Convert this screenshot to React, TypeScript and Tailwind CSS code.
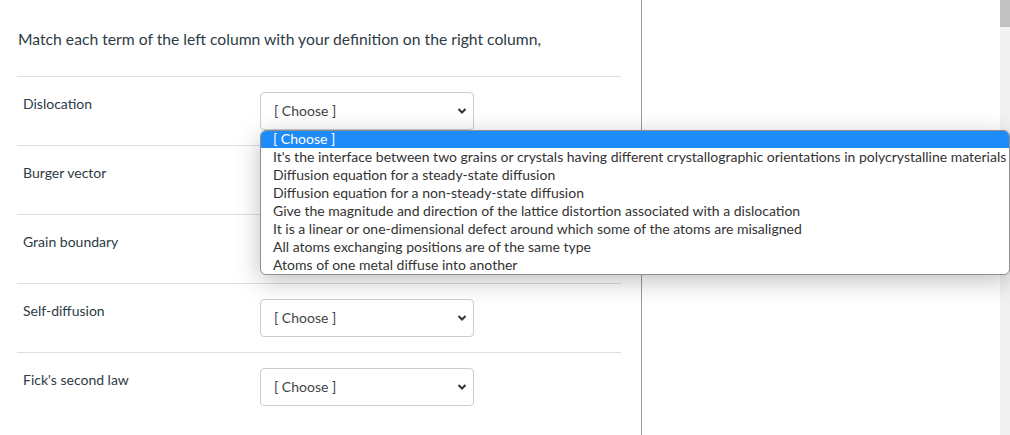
import React from "react";

const terms = ["Dislocation", "Burger vector", "Grain boundary", "Self-diffusion", "Fick's second law"];

const options = [
  "[ Choose ]",
  "It's the interface between two grains or crystals having different crystallographic orientations in polycrystalline materials",
  "Diffusion equation for a steady-state diffusion",
  "Diffusion equation for a non-steady-state diffusion",
  "Give the magnitude and direction of the lattice distortion associated with a dislocation",
  "It is a linear or one-dimensional defect around which some of the atoms are misaligned",
  "All atoms exchanging positions are of the same type",
  "Atoms of one metal diffuse into another",
];

const Chevron = () => (
  <svg width="10" height="8" viewBox="0 0 10 8" className="text-[#333]">
    <path d="M1.5 2 L5 5.5 L8.5 2" fill="none" stroke="currentColor" strokeWidth="2" />
  </svg>
);

const SelectBox = () => (
  <div className="flex h-[38px] w-[214px] items-center justify-between rounded-[4px] border border-[#c7cdd1] bg-white pb-[1px] pl-[13px] pr-[6px] text-[14px] text-[#444]">
    <span>[ Choose ]</span>
    <Chevron />
  </div>
);

export default function App() {
  return (
    <div className="relative flex h-[435px] w-[1010px] overflow-hidden bg-white font-['Lato',_'Liberation_Sans',_sans-serif]">
      <div className="w-[642px] shrink-0 border-r border-[#9a9a9a] pl-[17px] pr-[20px]">
        <p className="pt-[28px] pb-[26px] pl-[1px] text-[15.7px] leading-[22px] text-[#2d3b45]">
          Match each term of the left column with your definition on the right column,
        </p>
        {terms.map((term) => (
          <div key={term} className="flex h-[69px] border-t border-[#dcdfe2]">
            <div className="w-[243px] pl-[6px] pt-[18px] text-[14px] leading-[17px] text-[#2d3b45]">{term}</div>
            <div className="pt-[15px]">
              <SelectBox />
            </div>
          </div>
        ))}
      </div>
      <div className="flex-1" />
      <div className="w-[10px] shrink-0 bg-[#f1f1f1]">
        <div className="h-[27px] w-full bg-[#c1c1c1]" />
      </div>

      <div className="absolute left-[260px] top-[130px] w-[750px] overflow-hidden rounded-[6px] border border-[#8f8f8f] bg-white shadow-[0_6px_24px_rgba(0,0,0,0.25)]">
        {options.map((opt, i) => (
          <div
            key={i}
            className={
              i === 0
                ? "h-[17px] bg-[#1e8cf8] pl-[12px] text-[14px] leading-[16px] text-white"
                : "h-[18px] pl-[12px] text-[14px] leading-[17px] text-[#333] whitespace-nowrap"
            }
          >
            {opt}
          </div>
        ))}
      </div>
    </div>
  );
}
